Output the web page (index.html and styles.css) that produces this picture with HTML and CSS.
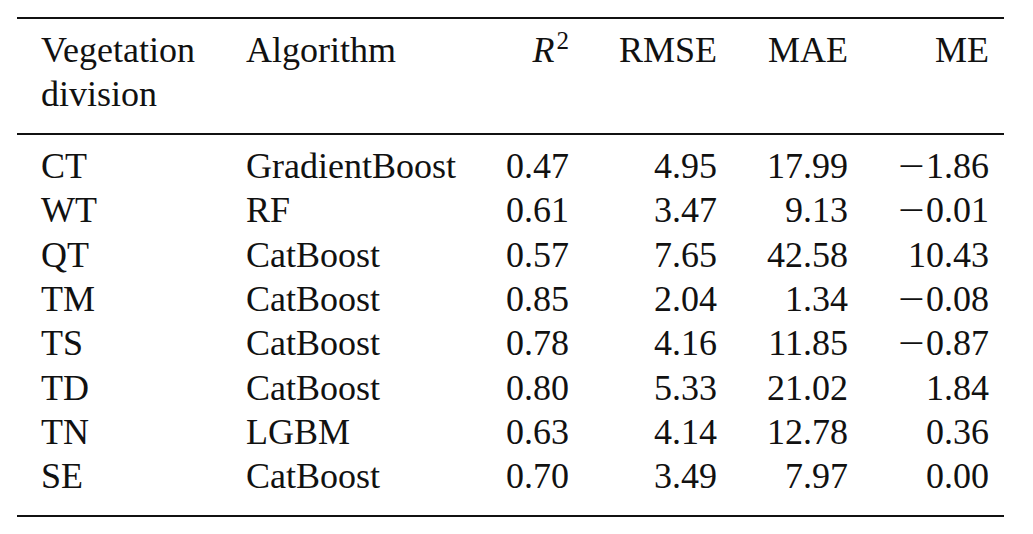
FILE: index.html
```html
<!DOCTYPE html>
<html lang="en">
<head>
<meta charset="utf-8">
<title>Model performance by vegetation division</title>
<link rel="stylesheet" href="styles.css">
</head>
<body>
<table class="results">
  <colgroup>
    <col class="c-div">
    <col class="c-alg">
    <col class="c-r2">
    <col class="c-rmse">
    <col class="c-mae">
    <col class="c-me">
  </colgroup>
  <thead>
    <tr>
      <th class="txt">Vegetation<br>division</th>
      <th class="txt">Algorithm</th>
      <th class="num"><span class="math">R</span><sup class="sq">2</sup></th>
      <th class="num">RMSE</th>
      <th class="num">MAE</th>
      <th class="num last">ME</th>
    </tr>
  </thead>
  <tbody>
    <tr><td class="txt">CT</td><td class="txt">GradientBoost</td><td class="num">0.47</td><td class="num">4.95</td><td class="num">17.99</td><td class="num last"><span class="minus">&minus;</span>1.86</td></tr>
    <tr><td class="txt">WT</td><td class="txt">RF</td><td class="num">0.61</td><td class="num">3.47</td><td class="num">9.13</td><td class="num last"><span class="minus">&minus;</span>0.01</td></tr>
    <tr><td class="txt">QT</td><td class="txt">CatBoost</td><td class="num">0.57</td><td class="num">7.65</td><td class="num">42.58</td><td class="num last">10.43</td></tr>
    <tr><td class="txt">TM</td><td class="txt">CatBoost</td><td class="num">0.85</td><td class="num">2.04</td><td class="num">1.34</td><td class="num last"><span class="minus">&minus;</span>0.08</td></tr>
    <tr><td class="txt">TS</td><td class="txt">CatBoost</td><td class="num">0.78</td><td class="num">4.16</td><td class="num">11.85</td><td class="num last"><span class="minus">&minus;</span>0.87</td></tr>
    <tr><td class="txt">TD</td><td class="txt">CatBoost</td><td class="num">0.80</td><td class="num">5.33</td><td class="num">21.02</td><td class="num last">1.84</td></tr>
    <tr><td class="txt">TN</td><td class="txt">LGBM</td><td class="num">0.63</td><td class="num">4.14</td><td class="num">12.78</td><td class="num last">0.36</td></tr>
    <tr><td class="txt">SE</td><td class="txt">CatBoost</td><td class="num">0.70</td><td class="num">3.49</td><td class="num">7.97</td><td class="num last">0.00</td></tr>
  </tbody>
</table>
</body>
</html>
```
FILE: styles.css
```css
html, body {
  margin: 0;
  padding: 0;
  background: #ffffff;
}

body {
  padding: 17px 0 0 17px;
  font-family: "Liberation Serif", "Times New Roman", serif;
  font-size: 36px;
  color: #111111;
}

.results {
  border-collapse: collapse;
  table-layout: fixed;
  width: 987px;
  border-top: 2px solid #111111;
  border-bottom: 2px solid #111111;
}

.c-div  { width: 229px; }
.c-alg  { width: 234px; }
.c-r2   { width: 89px; }
.c-rmse { width: 148px; }
.c-mae  { width: 131px; }
.c-me   { width: 156px; }

.results th,
.results td {
  padding: 0;
  line-height: 44.3px;
  font-weight: normal;
  vertical-align: top;
  white-space: nowrap;
}

.results thead tr {
  border-bottom: 2px solid #111111;
}

.results thead th {
  padding-top: 10px;
  padding-bottom: 17px;
  line-height: 43.6px;
}

.results tbody tr:first-child td {
  padding-top: 9px;
}

.results tbody tr:last-child td {
  padding-bottom: 16px;
}

.txt {
  text-align: left;
}

.results .txt:first-child {
  padding-left: 24px;
}

.num {
  text-align: right;
}

.results .last {
  padding-right: 15px;
}

.math {
  font-style: italic;
}

.sq {
  font-size: 25px;
  line-height: 0;
  vertical-align: 13px;
  margin-left: 2px;
}

.minus {
  display: inline-block;
  transform: scaleX(1.3);
  margin-right: 5px;
}
```
